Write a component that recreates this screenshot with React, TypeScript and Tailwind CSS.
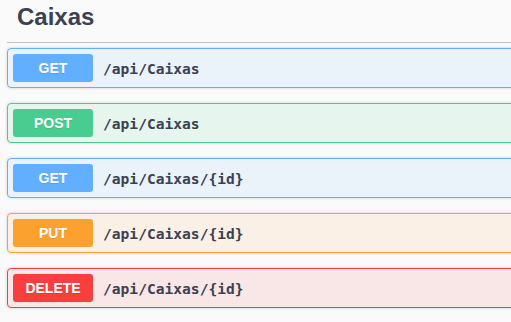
type Operation = {
  method: string;
  path: string;
  border: string;
  bg: string;
  badge: string;
};

const operations: Operation[] = [
  {
    method: "GET",
    path: "/api/Caixas",
    border: "border-[#61affe]",
    bg: "bg-[#61affe]/10",
    badge: "bg-[#61affe]",
  },
  {
    method: "POST",
    path: "/api/Caixas",
    border: "border-[#49cc90]",
    bg: "bg-[#49cc90]/10",
    badge: "bg-[#49cc90]",
  },
  {
    method: "GET",
    path: "/api/Caixas/{id}",
    border: "border-[#61affe]",
    bg: "bg-[#61affe]/10",
    badge: "bg-[#61affe]",
  },
  {
    method: "PUT",
    path: "/api/Caixas/{id}",
    border: "border-[#fca130]",
    bg: "bg-[#fca130]/10",
    badge: "bg-[#fca130]",
  },
  {
    method: "DELETE",
    path: "/api/Caixas/{id}",
    border: "border-[#f93e3e]",
    bg: "bg-[#f93e3e]/10",
    badge: "bg-[#f93e3e]",
  },
];

export default function App() {
  return (
    <main className="min-h-screen overflow-hidden bg-[#fafafa] font-['Liberation_Sans',Arial,sans-serif]">
      <div className="ml-[7px] w-[540px]">
        {/* Tag header */}
        <div className="border-b border-[#3b4151]/30 pt-[3px] pb-[11px] pl-[10px]">
          <h2 className="text-[24px] font-bold leading-[28px] text-[#3b4151]">
            Caixas
          </h2>
        </div>

        {/* Operations */}
        <div className="mt-[5px] flex flex-col gap-[15px]">
          {operations.map((op, i) => (
            <div
              key={i}
              className={`rounded-[4px] border shadow-[0_0_3px_rgba(0,0,0,0.19)] ${op.border} ${op.bg}`}
            >
              <div className="flex items-center p-[5px]">
                <span
                  className={`flex h-[28px] w-[80px] items-center justify-center rounded-[3px] text-[14px] font-bold text-white [text-shadow:0_1px_0_rgba(0,0,0,0.1)] ${op.badge}`}
                >
                  {op.method}
                </span>
                <span className="px-[10px] pt-[2px] font-['DejaVu_Sans_Mono',monospace] text-[14.6px] font-bold text-[#3b4151]">
                  {op.path}
                </span>
              </div>
            </div>
          ))}
        </div>
      </div>
    </main>
  );
}
